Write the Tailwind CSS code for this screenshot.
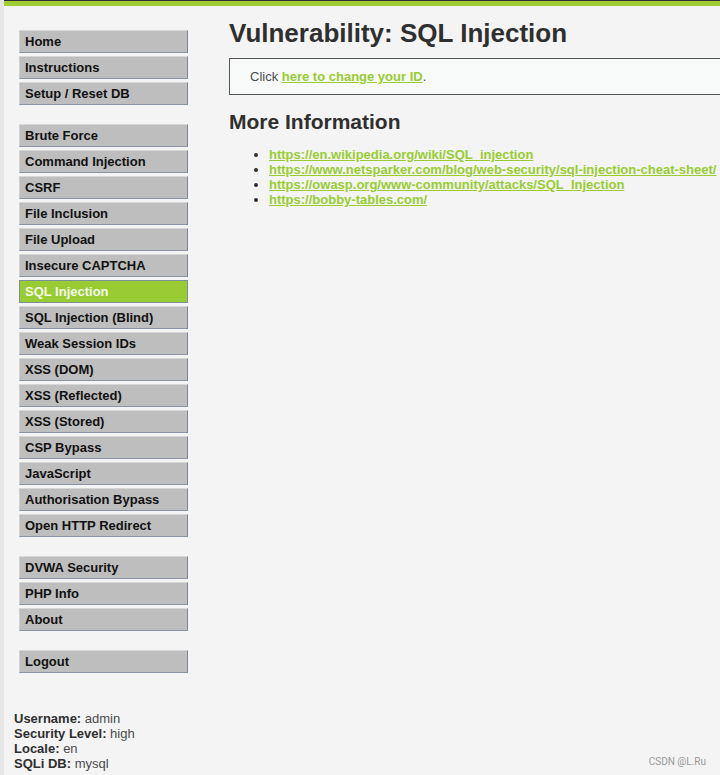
<!DOCTYPE html>
<html lang="en">
<head>
    <meta charset="UTF-8">
    <meta name="viewport" content="width=device-width, initial-scale=1.0">
    <title>Vulnerability: SQL Injection</title>
    <script src="https://cdn.jsdelivr.net/npm/@tailwindcss/browser@4"></script>
</head>
<body class="min-h-screen bg-[#e7e7e7] pl-1 font-['Liberation_Sans',Arial,sans-serif] text-[13px] leading-[15px] text-[#4a4a4a]">
    <div class="relative min-h-screen overflow-hidden bg-[#f4f4f4]">
        <header class="h-[6px] border-t border-[#2f2f2f] bg-[#a1cc33]"></header>

        <div class="flex">
            <!-- Left column: menu and session info -->
            <aside class="w-[225px] shrink-0 pt-6">
                <nav id="main-menu" class="flex w-[169px] flex-col gap-[19px] ml-[15px] font-bold"></nav>

                <div class="ml-[10px] mt-[38px]">
                    <p><b class="text-[#2f2f2f]">Username:</b> admin</p>
                    <p><b class="text-[#2f2f2f]">Security Level:</b> high</p>
                    <p><b class="text-[#2f2f2f]">Locale:</b> en</p>
                    <p><b class="text-[#2f2f2f]">SQLi DB:</b> mysql</p>
                </div>
            </aside>

            <main class="min-w-0 flex-1 pt-3">
                <h1 class="text-[26px] leading-[30px] font-bold text-[#2f2f2f]">Vulnerability: SQL Injection</h1>

                <div class="mt-[10px] border border-r-0 border-[#555] bg-[#f8fafa] px-5 py-[10px]">
                    Click <a href="#" class="font-bold text-[#99cc33] underline">here to change your ID</a>.
                </div>

                <h2 class="mt-[15px] text-[21px] leading-6 font-bold text-[#2f2f2f]">More Information</h2>
                <ul class="mt-[13px] list-disc pl-10 font-bold text-[#2f2f2f]">
                    <li><a href="#" class="text-[#99cc33] underline">https://en.wikipedia.org/wiki/SQL_injection</a></li>
                    <li><a href="#" class="text-[#99cc33] underline">https://www.netsparker.com/blog/web-security/sql-injection-cheat-sheet/</a></li>
                    <li><a href="#" class="text-[#99cc33] underline">https://owasp.org/www-community/attacks/SQL_Injection</a></li>
                    <li><a href="#" class="text-[#99cc33] underline">https://bobby-tables.com/</a></li>
                </ul>
            </main>
        </div>

        <span class="absolute right-[14px] bottom-[6px] font-[Roboto,sans-serif] text-[10px] leading-[14px] text-[#999]">CSDN @L.Ru</span>
    </div>

    <script>
        const groups = [
            ['Home', 'Instructions', 'Setup / Reset DB'],
            ['Brute Force', 'Command Injection', 'CSRF', 'File Inclusion', 'File Upload', 'Insecure CAPTCHA',
                'SQL Injection', 'SQL Injection (Blind)', 'Weak Session IDs', 'XSS (DOM)', 'XSS (Reflected)',
                'XSS (Stored)', 'CSP Bypass', 'JavaScript', 'Authorisation Bypass', 'Open HTTP Redirect'],
            ['DVWA Security', 'PHP Info', 'About'],
            ['Logout']
        ];
        const selected = 'SQL Injection';
        const base = 'block h-[23px] border pl-[5px] leading-[22px] ';
        const normal = 'border-t-[#d6d6d6] border-l-[#d0d0d0] border-r-[#7b859b] border-b-[#8a93a6] bg-[#bebebe] text-[#111]';
        const active = 'border-[#7b8f9b] bg-[#99cc33] text-[#f4f8e8]';

        document.getElementById('main-menu').innerHTML = groups.map(items => `
            <ul class="flex flex-col gap-[3px]">
                ${items.map(name => `<li><a href="#" class="${base}${name === selected ? active : normal}">${name}</a></li>`).join('')}
            </ul>
        `).join('');
    </script>
</body>
</html>
